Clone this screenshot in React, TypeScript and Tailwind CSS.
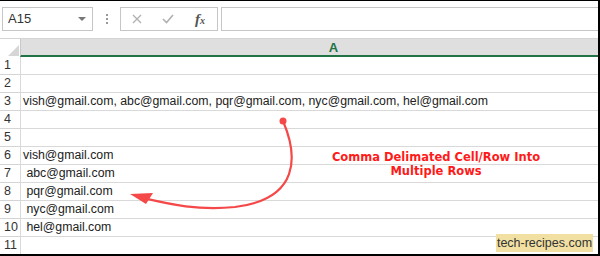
import React from "react";

const rows: { n: number; text: string }[] = [
  { n: 1, text: "" },
  { n: 2, text: "" },
  { n: 3, text: "vish@gmail.com, abc@gmail.com, pqr@gmail.com, nyc@gmail.com, hel@gmail.com" },
  { n: 4, text: "" },
  { n: 5, text: "" },
  { n: 6, text: "vish@gmail.com" },
  { n: 7, text: "\u00a0abc@gmail.com" },
  { n: 8, text: "\u00a0pqr@gmail.com" },
  { n: 9, text: "\u00a0nyc@gmail.com" },
  { n: 10, text: "\u00a0hel@gmail.com" },
  { n: 11, text: "" },
];

export default function App() {
  return (
    <div className="relative w-[600px] h-[256px] overflow-hidden bg-white border-t border-r-2 border-b-2 border-black font-['Liberation_Sans',sans-serif] text-[#222]">
      {/* formula bar */}
      <div className="h-[37px] flex items-start pt-[6px] pl-[2px]">
        <div className="w-[91px] h-[24px] shrink-0 border border-[#c6c6c6] flex items-center justify-between pl-[5px] pr-[6px]">
          <span className="text-[13px] text-[#333]">A15</span>
          <svg width="8" height="5" viewBox="0 0 8 5">
            <path d="M0 0 L8 0 L4 4 Z" fill="#777" />
          </svg>
        </div>
        <div className="w-[27px] h-[24px] shrink-0 flex flex-col items-center justify-center gap-[2px]">
          <span className="w-[2px] h-[2px] bg-[#999]" />
          <span className="w-[2px] h-[2px] bg-[#999]" />
          <span className="w-[2px] h-[2px] bg-[#999]" />
        </div>
        <div className="w-[98px] h-[24px] shrink-0 border border-[#c6c6c6] flex items-center">
          <div className="w-[32px] flex justify-center">
            <svg width="10" height="10" viewBox="0 0 10 10">
              <path d="M1 1 L9 9 M9 1 L1 9" stroke="#b0b0b0" strokeWidth="1.3" />
            </svg>
          </div>
          <div className="w-[30px] flex justify-center">
            <svg width="12" height="10" viewBox="0 0 12 10">
              <path d="M1 5 L4.5 8.5 L11 1" stroke="#b0b0b0" strokeWidth="1.6" fill="none" />
            </svg>
          </div>
          <div className="w-[34px] flex justify-center">
            <span className="font-['Liberation_Serif',serif] italic font-bold text-[15px] text-[#555] leading-none">
              f<span className="text-[10px]">x</span>
            </span>
          </div>
        </div>
        <div className="ml-[3px] flex-1 h-[24px] border border-[#c6c6c6] border-r-0" />
      </div>

      {/* column header */}
      <div className="flex h-[19px] border-t border-[#d4d4d4]">
        <div className="w-[20px] shrink-0 h-[18px] relative bg-white">
          <svg className="absolute right-[1px] bottom-[1px]" width="11" height="11" viewBox="0 0 11 11">
            <path d="M11 0 L11 11 L0 11 Z" fill="#d6d6d6" />
          </svg>
        </div>
        <div className="w-[626px] shrink-0 border-l border-[#c8c8c8] bg-[#dfdfdf] border-b-2 border-b-[#217346] flex items-center justify-center">
          <span className="text-[13px] font-bold text-[#217346] leading-none">A</span>
        </div>
      </div>

      {/* rows */}
      <div className="flex flex-col">
        {rows.map((r) => (
          <div key={r.n} className="flex h-[18px]">
            <div className="w-[20px] shrink-0 border-b border-[#d4d4d4] flex items-center pl-[4px] text-[12.5px] text-[#333]">
              {r.n}
            </div>
            <div className="flex-1 border-l border-b border-[#d9d9d9] flex items-center pl-[2px] text-[12.3px] text-[#222] whitespace-nowrap">
              {r.text}
            </div>
          </div>
        ))}
      </div>

      {/* annotation */}
      <div className="absolute left-[306px] top-[149px] w-[260px] text-center font-['DejaVu_Sans',sans-serif] font-bold text-[11.5px] leading-[14px] text-[#ff1a1a]">
        <div>Comma Delimated Cell/Row Into</div>
        <div>Multiple Rows</div>
      </div>

      <svg className="absolute left-0 top-0 pointer-events-none" width="600" height="256" viewBox="0 0 600 256">
        <circle cx="283" cy="120" r="3.5" fill="#f54848" />
        <path
          d="M283 120 C 298 155 300 198 235 206 C 195 210 165 202 143 197"
          stroke="#f54848"
          strokeWidth="2.2"
          fill="none"
        />
        <path d="M130 193 L153 192 L146 203 Z" fill="#f54848" />
      </svg>

      {/* watermark */}
      <div className="absolute left-[496px] top-[233px] w-[97px] h-[18px] bg-[#f1e0a2] flex items-center justify-center text-[12.5px] text-[#333]">
        tech-recipes.com
      </div>
    </div>
  );
}
